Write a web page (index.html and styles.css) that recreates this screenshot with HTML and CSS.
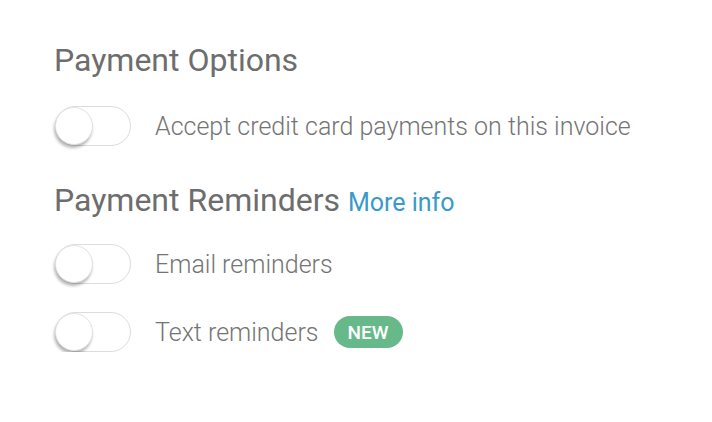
FILE: index.html
```html
<!DOCTYPE html>
<html>
<head>
<meta charset="utf-8">
<link rel="stylesheet" href="styles.css">
</head>
<body>
<div class="page">
  <h2 class="heading">Payment Options</h2>
  <div class="row">
    <span class="toggle"><span class="knob"></span></span>
    <span class="label">Accept credit card payments on this invoice</span>
  </div>
  <h2 class="heading heading-second">Payment Reminders <a class="more" href="#">More info</a></h2>
  <div class="row">
    <span class="toggle"><span class="knob"></span></span>
    <span class="label">Email reminders</span>
  </div>
  <div class="row row-tight">
    <span class="toggle"><span class="knob"></span></span>
    <span class="label">Text reminders</span>
    <span class="badge">NEW</span>
  </div>
</div>
</body>
</html>
```
FILE: styles.css
```css
html, body {
  margin: 0;
  padding: 0;
  background: #ffffff;
}
.page {
  font-family: Roboto, "Liberation Sans", sans-serif;
  padding: 40px 0 0 54px;
}
.heading {
  margin: 0;
  font-size: 32px;
  line-height: 40px;
  font-weight: 400;
  color: #6d6d6d;
}
.heading-second {
  margin-top: 34px;
}
.more {
  color: #3a99c9;
  font-size: 25px;
  line-height: 1;
  text-decoration: none;
  font-weight: 400;
}
.row {
  display: flex;
  align-items: center;
  height: 40px;
  margin-top: 26px;
}
.heading-second + .row {
  margin-top: 24px;
}
.row-tight {
  margin-top: 28px;
}
.toggle {
  position: relative;
  display: block;
  box-sizing: border-box;
  width: 76px;
  height: 40px;
  margin-left: 1px;
  border: 1px solid #dcdcdc;
  border-radius: 20px;
  background: #fff;
}
.knob {
  position: absolute;
  left: -1px;
  top: 0;
  box-sizing: border-box;
  width: 38px;
  height: 38px;
  border-radius: 50%;
  background: #fff;
  border: 1px solid #e2e2e2;
  box-shadow: -1px 3px 3px rgba(0, 0, 0, 0.28);
}
.label {
  margin-left: 24px;
  font-size: 25px;
  font-weight: 300;
  color: #747474;
  line-height: 40px;
  padding-top: 1px;
}
.badge {
  margin-left: 15px;
  display: inline-flex;
  align-items: center;
  justify-content: center;
  width: 69px;
  height: 32px;
  border-radius: 16px;
  background: #68b98a;
  color: #fff;
  font-size: 19px;
  font-weight: 500;
}
```
